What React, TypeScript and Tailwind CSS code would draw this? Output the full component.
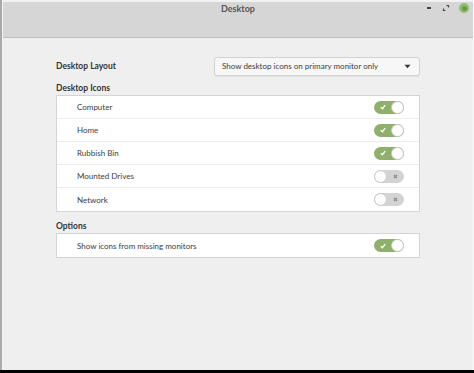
import React from "react";

function Toggle({ on }: { on: boolean }) {
  if (on) {
    return (
      <div className="relative w-[30px] h-[13px] rounded-full bg-[#8fb06a]">
        <svg className="absolute left-[6px] top-[3.5px]" width="6" height="6" viewBox="0 0 6 6">
          <path d="M0.8 3.2 L2.4 4.7 L5.2 1.2" stroke="#ffffff" strokeWidth="1.3" fill="none" />
        </svg>
        <div className="absolute right-[0px] top-[0px] w-[13px] h-[13px] rounded-full bg-white border border-[#c9c9c9]" />
      </div>
    );
  }
  return (
    <div className="relative w-[30px] h-[13px] rounded-full bg-[#d3d3d3]">
      <svg className="absolute right-[6px] top-[4px]" width="5" height="5" viewBox="0 0 5 5">
        <path d="M1 1 L4 4 M4 1 L1 4" stroke="#888" strokeWidth="1.1" fill="none" />
      </svg>
      <div className="absolute left-[0px] top-[0px] w-[13px] h-[13px] rounded-full bg-white border border-[#c9c9c9]" />
    </div>
  );
}

function Row({ label, on, last }: { label: string; on: boolean; last?: boolean }) {
  return (
    <div className={`h-[23px] flex items-center justify-between pl-[20px] pr-[15px] ${last ? "" : "border-b border-[#ececec]"}`}>
      <span className="text-[8px] text-[#3c3c3c]">{label}</span>
      <Toggle on={on} />
    </div>
  );
}

export default function App() {
  return (
    <div
      className="w-[474px] h-[373px] bg-black flex flex-col overflow-hidden"
      style={{ fontFamily: 'Lato, "Noto Sans", sans-serif' }}
    >
      <div className="h-[370px] flex">
        <div className="w-[2px] bg-[#a9a9a9]" />
        <div className="flex-1 flex flex-col border-l border-[#f4f4f4] border-r border-r-[#fafafa]">
          <div className="h-[2px] bg-[#f2f2f2]" />
          <div className="h-[36px] bg-[#d6d6d6] border-b border-[#bdbdbd] relative flex items-start justify-center pt-0">
            <span className="text-[9px] font-bold text-[#555555] leading-[12px] mt-[1px]">Desktop</span>
            <div className="absolute right-[4px] top-[1px] flex items-center gap-[9px]">
              <div className="w-[8px] h-[8px] flex items-center justify-center">
                <div className="w-[4px] h-[1.5px] bg-[#444]" />
              </div>
              <svg width="8" height="8" viewBox="0 0 8 8">
                <path d="M4.5 1.5 H6.5 V3.5 M3.5 6.5 H1.5 V4.5" stroke="#444" strokeWidth="1.2" fill="none" />
              </svg>
              <div className="w-[10px] h-[10px] rounded-full bg-[#8fbf6a] flex items-center justify-center">
                <div className="w-[5px] h-[5px] rounded-full bg-[#6a9a45]" />
              </div>
            </div>
          </div>
          <div className="flex-1 bg-[#efefef] pl-[53px] pr-[53px] pt-[18px]">
            <div className="flex items-center justify-between h-[20px]">
              <span className="text-[8.5px] font-bold text-[#333]">Desktop Layout</span>
              <div className="w-[206px] h-[19px] bg-[#f7f7f7] border border-[#d2d2d2] rounded-[3px] flex items-center justify-between pl-[7px] pr-[8px] shadow-[0_1px_0_rgba(0,0,0,0.05)]">
                <span className="text-[8px] text-[#3c3c3c]">Show desktop icons on primary monitor only</span>
                <svg width="7" height="5" viewBox="0 0 7 5">
                  <path d="M0.5 0.8 L6.5 0.8 L3.5 4.2 Z" fill="#333" />
                </svg>
              </div>
            </div>
            <div className="mt-[5px] h-[14px] flex items-center">
              <span className="text-[8.5px] font-bold text-[#333]">Desktop Icons</span>
            </div>
            <div className="bg-white border border-[#d4d4d4]">
              <Row label="Computer" on />
              <Row label="Home" on />
              <Row label="Rubbish Bin" on />
              <Row label="Mounted Drives" on={false} />
              <Row label="Network" on={false} last />
            </div>
            <div className="mt-[7px] h-[14px] flex items-center">
              <span className="text-[8.5px] font-bold text-[#333]">Options</span>
            </div>
            <div className="bg-white border border-[#d4d4d4]">
              <Row label="Show icons from missing monitors" on last />
            </div>
          </div>
        </div>
      </div>
    </div>
  );
}
